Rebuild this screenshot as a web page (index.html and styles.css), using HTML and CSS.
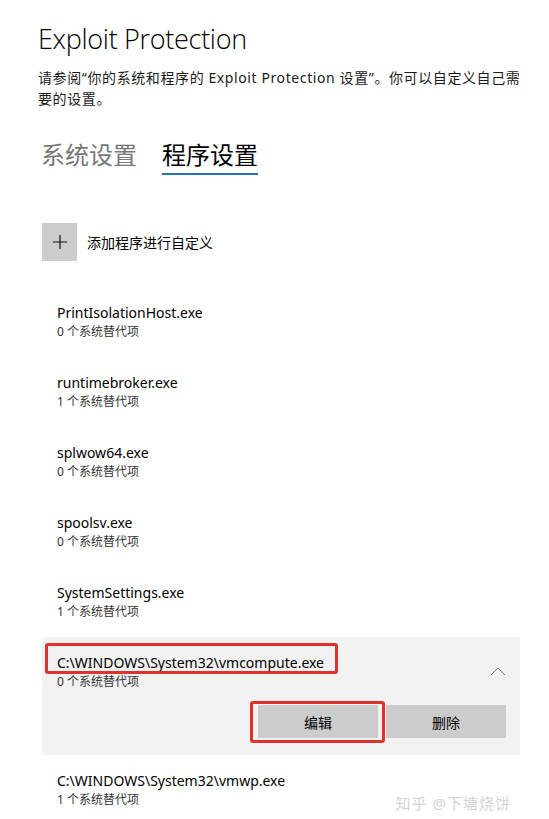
FILE: index.html
```html
<!DOCTYPE html>
<html lang="zh-CN">
<head>
    <meta charset="UTF-8">
    <meta name="viewport" content="width=device-width, initial-scale=1.0">
    <title>Exploit Protection</title>
    <link rel="stylesheet" href="styles.css">
</head>
<body>
    <div class="page">
        <h1 class="title">Exploit Protection</h1>
        <p class="desc">请参阅“你的系统和程序的 Exploit Protection 设置”。你可以自定义自己需要的设置。</p>

        <div class="tabs">
            <span class="tab">系统设置</span>
            <span class="tab active">程序设置</span>
        </div>

        <div class="add-row">
            <span class="add-btn">
                <svg width="16" height="16" viewBox="0 0 16 16"><path d="M8 1v14M1 8h14" stroke="#111" stroke-width="1.2" fill="none"/></svg>
            </span>
            <span class="add-label">添加程序进行自定义</span>
        </div>

        <ul class="programs">
            <li class="program">
                <div class="name">PrintIsolationHost.exe</div>
                <div class="count">0 个系统替代项</div>
            </li>
            <li class="program">
                <div class="name">runtimebroker.exe</div>
                <div class="count">1 个系统替代项</div>
            </li>
            <li class="program">
                <div class="name">splwow64.exe</div>
                <div class="count">0 个系统替代项</div>
            </li>
            <li class="program">
                <div class="name">spoolsv.exe</div>
                <div class="count">0 个系统替代项</div>
            </li>
            <li class="program">
                <div class="name">SystemSettings.exe</div>
                <div class="count">1 个系统替代项</div>
            </li>
            <li class="program open">
                <span class="mark mark-name"></span>
                <div class="head">
                    <div>
                        <div class="name">C:\WINDOWS\System32\vmcompute.exe</div>
                        <div class="count">0 个系统替代项</div>
                    </div>
                    <svg class="chevron" width="16" height="10" viewBox="0 0 16 10"><path d="M1 9l7-7 7 7" stroke="#777" stroke-width="1" fill="none"/></svg>
                </div>
                <div class="actions">
                    <button class="btn">编辑<span class="mark mark-btn"></span></button>
                    <button class="btn">删除</button>
                </div>
            </li>
            <li class="program">
                <div class="name">C:\WINDOWS\System32\vmwp.exe</div>
                <div class="count">1 个系统替代项</div>
            </li>
        </ul>
    </div>
    <div class="watermark">知乎 @下塘烧饼</div>
</body>
</html>
```

FILE: styles.css
```css
body {
    margin: 0;
    background: #ffffff;
    color: #000000;
    font-family: "Noto Sans", "Noto Sans CJK SC", sans-serif;
    overflow: hidden;
}

.page {
    padding: 20px 0 0 38px;
    width: 490px;
}

.title {
    margin: 0;
    font-family: "Open Sans", "Noto Sans", sans-serif;
    font-size: 27px;
    font-weight: 300;
    line-height: 38px;
    letter-spacing: -0.3px;
}

.desc {
    margin: 9px 0 0;
    font-size: 14px;
    line-height: 21px;
    color: #1a1a1a;
    width: 486px;
    letter-spacing: 0.6px;
}

.tabs {
    display: flex;
    gap: 25px;
    margin: 30px 0 0 3px;
}

.tab {
    font-size: 24px;
    line-height: 32px;
    color: #777777;
    padding-bottom: 2px;
    border-bottom: 2px solid transparent;
}

.tab.active {
    color: #000000;
    border-bottom-color: #2270b8;
}

.add-row {
    display: flex;
    align-items: center;
    gap: 10px;
    margin: 48px 0 0 4px;
}

.add-btn {
    width: 35px;
    height: 38px;
    background: #cccccc;
    display: flex;
    align-items: center;
    justify-content: center;
}

.add-label {
    font-size: 14px;
}

.programs {
    list-style: none;
    margin: 26px 0 0 4px;
    padding: 0;
    width: 478px;
}

.program {
    position: relative;
    height: 70px;
    padding: 16px 14px 0 15px;
    box-sizing: border-box;
}

.name {
    font-size: 14px;
    line-height: 20px;
    color: #000000;
}

.count {
    font-size: 12px;
    line-height: 18px;
    color: #333333;
}

.program.open {
    height: 118px;
    background: #f2f2f2;
}

.head {
    display: flex;
    justify-content: space-between;
    align-items: center;
}

.chevron {
    margin-top: -2px;
}

.actions {
    display: flex;
    justify-content: flex-end;
    gap: 8px;
    margin-top: 14px;
}

.btn {
    position: relative;
    width: 120px;
    height: 33px;
    border: none;
    background: #cccccc;
    font-family: inherit;
    font-size: 14px;
    color: #000000;
    padding: 0;
}

.mark {
    position: absolute;
    border: 3px solid #e0322d;
    border-radius: 3px;
}

.mark-name {
    left: 3px;
    top: 6px;
    width: 287px;
    height: 25px;
}

.mark-btn {
    left: -8px;
    top: -4px;
    right: -7px;
    bottom: -5px;
}

.watermark {
    position: absolute;
    right: 38px;
    top: 792px;
    font-size: 15px;
    color: #d4d4d4;
    letter-spacing: 1px;
}
```
